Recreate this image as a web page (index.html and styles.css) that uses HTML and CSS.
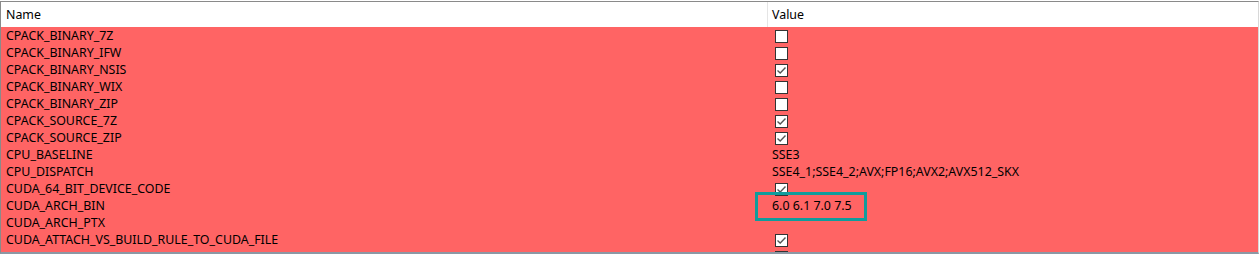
FILE: index.html
```html
<!DOCTYPE html>
<html>
<head>
<meta charset="utf-8">
<link rel="stylesheet" href="styles.css">
</head>
<body>
<div class="frame">
  <div class="header">
    <div class="hname">Name</div>
    <div class="hvalue">Value</div>
  </div>
  <div class="rows">
    <div class="row"><div class="name">CPACK_BINARY_7Z</div><div class="value"><span class="cb"></span></div></div>
    <div class="row"><div class="name">CPACK_BINARY_IFW</div><div class="value"><span class="cb"></span></div></div>
    <div class="row"><div class="name">CPACK_BINARY_NSIS</div><div class="value"><span class="cb"><svg viewBox="0 0 11 11"><path d="M1.5 5.5 L4.2 8 L9.5 2.5" /></svg></span></div></div>
    <div class="row"><div class="name">CPACK_BINARY_WIX</div><div class="value"><span class="cb"></span></div></div>
    <div class="row"><div class="name">CPACK_BINARY_ZIP</div><div class="value"><span class="cb"></span></div></div>
    <div class="row"><div class="name">CPACK_SOURCE_7Z</div><div class="value"><span class="cb"><svg viewBox="0 0 11 11"><path d="M1.5 5.5 L4.2 8 L9.5 2.5" /></svg></span></div></div>
    <div class="row"><div class="name">CPACK_SOURCE_ZIP</div><div class="value"><span class="cb"><svg viewBox="0 0 11 11"><path d="M1.5 5.5 L4.2 8 L9.5 2.5" /></svg></span></div></div>
    <div class="row"><div class="name">CPU_BASELINE</div><div class="value"><span class="txt">SSE3</span></div></div>
    <div class="row"><div class="name">CPU_DISPATCH</div><div class="value"><span class="txt">SSE4_1;SSE4_2;AVX;FP16;AVX2;AVX512_SKX</span></div></div>
    <div class="row"><div class="name">CUDA_64_BIT_DEVICE_CODE</div><div class="value"><span class="cb"><svg viewBox="0 0 11 11"><path d="M1.5 5.5 L4.2 8 L9.5 2.5" /></svg></span></div></div>
    <div class="row"><div class="name">CUDA_ARCH_BIN</div><div class="value"><span class="txt">6.0 6.1 7.0 7.5</span></div></div>
    <div class="row"><div class="name">CUDA_ARCH_PTX</div><div class="value"></div></div>
    <div class="row"><div class="name">CUDA_ATTACH_VS_BUILD_RULE_TO_CUDA_FILE</div><div class="value"><span class="cb"><svg viewBox="0 0 11 11"><path d="M1.5 5.5 L4.2 8 L9.5 2.5" /></svg></span></div></div>
    <div class="row"><div class="name">CUDA_BUILD_CUBIN</div><div class="value"><span class="cb"></span></div></div>
  </div>
  <div class="highlight"></div>
</div>
</body>
</html>
```

FILE: styles.css
```css
html, body {
  margin: 0;
  padding: 0;
  background: #ffffff;
}
body {
  width: 1260px;
  height: 255px;
  overflow: hidden;
  padding-top: 1px;
  box-sizing: border-box;
  font-family: "Noto Sans", "Liberation Sans", sans-serif;
  font-size: 12.4px;
  color: #000;
}
.frame {
  position: relative;
  width: 1259px;
  height: 253px;
  box-sizing: border-box;
  border-top: 1px solid #8a8a8a;
  border-left: 1px solid #8a8a8a;
  border-right: 1px solid #d8d8d8;
  border-bottom: 2px solid #8c98a4;
  overflow: hidden;
}
.header {
  display: flex;
  height: 25px;
  background: #ffffff;
  line-height: 25px;
}
.hname {
  width: 767px;
  padding-left: 5px;
  box-sizing: border-box;
  border-right: 1px solid #e5e5e5;
}
.hvalue {
  padding-left: 4px;
}
.rows {
  background: #ff6464;
}
.row {
  display: flex;
  height: 17px;
  line-height: 17px;
}
.name {
  width: 767px;
  padding-left: 5px;
  box-sizing: border-box;
  white-space: nowrap;
}
.value {
  flex: 1;
  display: flex;
  align-items: center;
  padding-left: 5px;
  white-space: nowrap;
}
.txt {
  margin-left: -1px;
}
.cb {
  width: 13px;
  height: 13px;
  box-sizing: border-box;
  border: 1px solid #333333;
  background: #ffffff;
  margin-left: 2px;
  margin-top: 1px;
  display: flex;
  align-items: center;
  justify-content: center;
}
.cb svg {
  width: 11px;
  height: 11px;
  fill: none;
  stroke: #555555;
  stroke-width: 1.4;
}
.highlight {
  position: absolute;
  left: 754px;
  top: 190px;
  width: 112px;
  height: 29px;
  box-sizing: border-box;
  border: 3px solid #109c9c;
}
```
